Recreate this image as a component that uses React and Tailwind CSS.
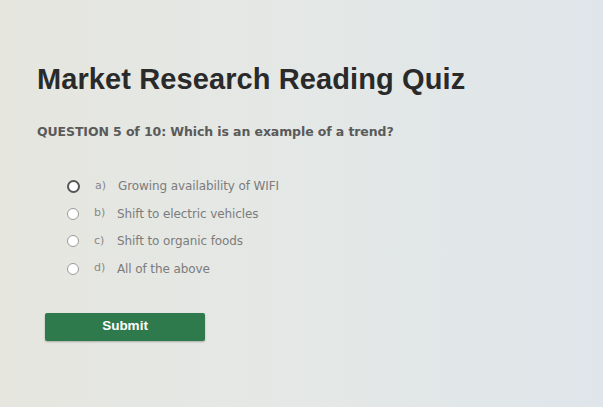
import React from 'react';

const options = [
  { key: 'a)', text: 'Growing availability of WIFI', focused: true },
  { key: 'b)', text: 'Shift to electric vehicles' },
  { key: 'c)', text: 'Shift to organic foods' },
  { key: 'd)', text: 'All of the above' },
];

export default function App() {
  return (
    <div className="w-[603px] h-[407px] overflow-hidden bg-gradient-to-r from-[#e6e6df] via-[#e4e8e6] to-[#dfe5ea] font-['Liberation_Sans',Arial,sans-serif]">
      <div className="pl-[37px] pt-[62px]">
        <h1 className="text-[29px] leading-[34px] font-bold text-[#2a2a2a] tracking-[0.1px]">
          Market Research Reading Quiz
        </h1>

        <p className="mt-[28px] font-['DejaVu_Sans',Verdana,sans-serif] text-[12.5px] leading-[16px] font-bold text-[#5a5a5a] tracking-[-0.1px]">
          QUESTION 5 of 10: Which is an example of a trend?
        </p>

        <ul className="mt-[38px] ml-[30px] flex flex-col gap-[11.5px]">
          {options.map((o) => (
            <li key={o.key} className="flex items-center h-[16px]">
              <span
                className={
                  o.focused
                    ? 'w-[13px] h-[13px] rounded-full border-[2.5px] border-[#555] bg-white'
                    : 'w-[12px] h-[12px] rounded-full border-[1.5px] border-[#9a9a9a] bg-white'
                }
              />
              <span className="ml-[15px] w-[23px] font-['DejaVu_Sans',Verdana,sans-serif] text-[11px] text-[#888]">{o.key}</span>
              <span className="font-['DejaVu_Sans',Verdana,sans-serif] text-[12px] text-[#7c7c7c] tracking-[-0.1px]">{o.text}</span>
            </li>
          ))}
        </ul>

        <button className="mt-[36px] ml-[8px] w-[160px] h-[28px] rounded-[2px] bg-[#2f7a4c] text-white text-[13.5px] font-bold flex items-center justify-center shadow-[0_1px_2px_rgba(0,0,0,0.25)]">
          Submit
        </button>
      </div>
    </div>
  );
}
